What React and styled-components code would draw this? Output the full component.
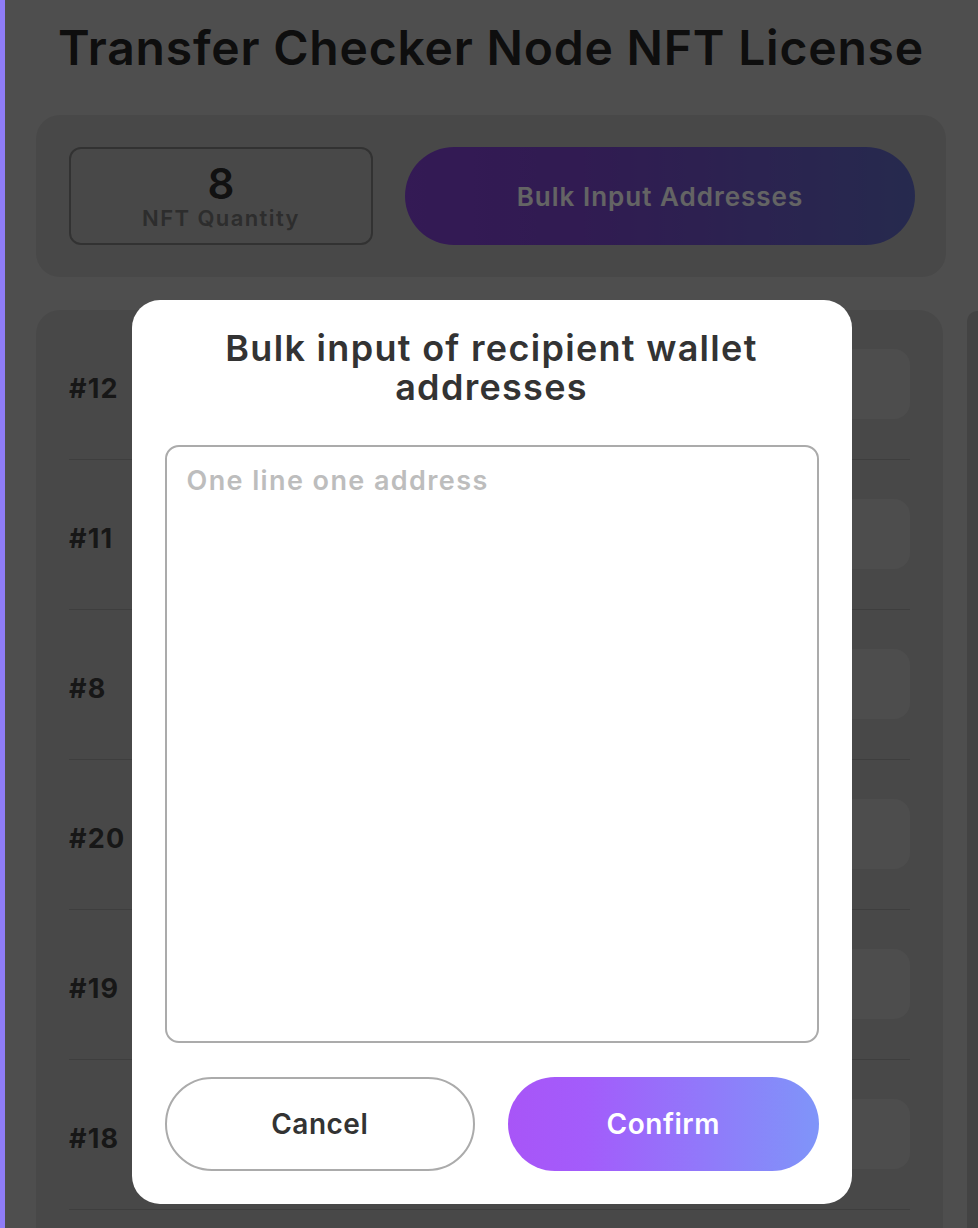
import React from "react";
import styled, { createGlobalStyle } from "styled-components";

const GlobalStyle = createGlobalStyle`
  html, body { margin: 0; padding: 0; }
  body {
    font-family: Inter, "Noto Sans", "Liberation Sans", sans-serif;
    background: #c3c3c3;
    overflow: hidden;
  }
  * { box-sizing: border-box; }
`;

const Page = styled.div`
  display: flex;
  min-height: 100vh;
  width: 100%;
`;

const Strip = styled.div`
  width: 5px;
  flex: none;
  background: #8f7cf7;
`;

const Column = styled.main`
  width: 910px;
  flex: none;
  margin-left: 31px;
  padding-top: 20px;
  display: flex;
  flex-direction: column;
`;

const Title = styled.h1`
  margin: 0 0 40px;
  text-align: center;
  font-size: 48px;
  line-height: 55px;
  font-weight: 600;
  color: #252525;
  letter-spacing: 0.8px;
  white-space: nowrap;
`;

const TopPanel = styled.section`
  display: grid;
  grid-template-columns: 304px 1fr;
  gap: 32px;
  padding: 32px 31px 32px 33px;
  background: #b4b4b4;
  border-radius: 24px;
`;

const QuantityBox = styled.div`
  height: 98px;
  border: 2px solid #7d7d7d;
  border-radius: 12px;
  display: flex;
  flex-direction: column;
  align-items: center;
  justify-content: center;
  padding-top: 2px;
`;

const QuantityValue = styled.span`
  font-size: 42px;
  line-height: 42px;
  font-weight: 600;
  color: #2b2b2b;
`;

const QuantityLabel = styled.span`
  font-size: 22px;
  line-height: 26px;
  font-weight: 600;
  color: #707070;
  letter-spacing: 1.4px;
`;

const BulkButton = styled.button`
  height: 98px;
  border: none;
  border-radius: 49px;
  background: linear-gradient(90deg, #8241d4 0%, #7a45cc 35%, #5f69c3 100%);
  color: #fafafa;
  font-family: inherit;
  font-size: 26px;
  font-weight: 600;
  letter-spacing: 1px;
`;

const ListPanel = styled.section`
  margin-top: 33px;
  margin-right: 3px;
  padding: 0 33px 80px;
  background: #b4b4b4;
  border-radius: 24px 24px 0 0;
  display: flex;
  flex-direction: column;
`;

const Row = styled.div`
  display: grid;
  grid-template-columns: 80px 1fr;
  align-items: center;
  padding: 39px 0 40px;
  border-bottom: 1px solid #9b9b9b;
`;

const RowLabel = styled.span`
  font-size: 27px;
  font-weight: 700;
  color: #3a3a3a;
  letter-spacing: 1.2px;
  transform: translateY(4px);
`;

const RowInput = styled.div`
  height: 70px;
  border-radius: 16px;
  background: #c0c0c0;
`;

const Rail = styled.div`
  margin-left: 21px;
  margin-top: 311px;
  flex: 1;
  background: #a8a8a8;
  border-radius: 10px 0 0 0;
`;

const Overlay = styled.div`
  position: fixed;
  top: 0;
  right: 0;
  bottom: 0;
  left: 5px;
  background: rgba(0, 0, 0, 0.6);
  display: flex;
  justify-content: center;
  align-items: flex-start;
  padding-top: 300px;
`;

const Modal = styled.div`
  width: 720px;
  height: 904px;
  background: #ffffff;
  border-radius: 28px;
  padding: 29px 33px 33px;
  display: flex;
  flex-direction: column;
`;

const ModalTitle = styled.h2`
  margin: 0;
  text-align: center;
  font-size: 36px;
  line-height: 39px;
  font-weight: 600;
  color: #333333;
  letter-spacing: 1.3px;
  padding: 0 30px;
`;

const AddressArea = styled.textarea`
  margin-top: 38px;
  height: 598px;
  width: 100%;
  resize: none;
  border: 2px solid #ababab;
  border-radius: 14px;
  padding: 18px 20px;
  font-family: inherit;
  font-size: 27px;
  line-height: 32px;
  font-weight: 600;
  letter-spacing: 1.4px;
  color: #333;
  outline: none;
  &::placeholder { color: #bdbdbd; }
`;

const Actions = styled.div`
  margin-top: 34px;
  display: grid;
  grid-template-columns: 1fr 1fr;
  gap: 33px;
`;

const ActionButton = styled.button`
  height: 94px;
  border-radius: 47px;
  font-family: inherit;
  font-size: 28px;
  font-weight: 600;
  letter-spacing: 0.5px;
  cursor: pointer;
  border: ${(p) => (p.$primary ? "none" : "2px solid #ababab")};
  background: ${(p) =>
    p.$primary ? "linear-gradient(90deg, #a855f7 0%, #a35cfb 25%, #7f95f9 100%)" : "#ffffff"};
  color: ${(p) => (p.$primary ? "#ffffff" : "#333333")};
`;

const ids = ["#12", "#11", "#8", "#20", "#19", "#18"];

export default function App() {
  return (
    <>
      <GlobalStyle />
      <Page>
        <Strip />
        <Column>
          <Title>Transfer Checker Node NFT License</Title>
          <TopPanel>
            <QuantityBox>
              <QuantityValue>8</QuantityValue>
              <QuantityLabel>NFT Quantity</QuantityLabel>
            </QuantityBox>
            <BulkButton>Bulk Input Addresses</BulkButton>
          </TopPanel>
          <ListPanel>
            {ids.map((id) => (
              <Row key={id}>
                <RowLabel>{id}</RowLabel>
                <RowInput />
              </Row>
            ))}
          </ListPanel>
        </Column>
        <Rail />
      </Page>
      <Overlay>
        <Modal>
          <ModalTitle>Bulk input of recipient wallet addresses</ModalTitle>
          <AddressArea placeholder="One line one address" />
          <Actions>
            <ActionButton>Cancel</ActionButton>
            <ActionButton $primary>Confirm</ActionButton>
          </Actions>
        </Modal>
      </Overlay>
    </>
  );
}
